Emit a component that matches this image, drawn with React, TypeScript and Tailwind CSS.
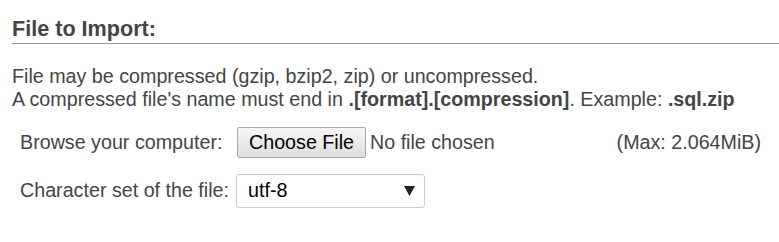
import React from 'react';

const App = () => {
  return (
    <div className="w-[779px] h-[242px] bg-white text-[#444] font-['Liberation_Sans',Arial,sans-serif]">
      <div className="pl-3 pt-[17px]">
        <h2 className="text-[21.6px] leading-[24px] font-bold pb-[2px] border-b border-[#999]">File to Import:</h2>
        <div className="mt-[21px] text-[19.7px] leading-[23px]">
          <p>File may be compressed (gzip, bzip2, zip) or uncompressed.</p>
          <p>
            A compressed file's name must end in <b>.[format].[compression]</b>. Example: <b>.sql.zip</b>
          </p>
        </div>
      </div>
      <div className="pl-5 pr-[18px] mt-[16px] text-[19.7px]">
        <div className="flex items-center h-[31px]">
          <span className="w-[217px]">Browse your computer:</span>
          <button className="w-[129px] h-[31px] border border-[#aaa] rounded-[2px] bg-gradient-to-b from-[#f6f6f6] to-[#dedede] text-black">
            Choose File
          </button>
          <span className="ml-[4px]">No file chosen</span>
          <span className="ml-auto">(Max: 2.064MiB)</span>
        </div>
        <div className="flex items-center mt-[16px]">
          <span className="w-[216px]">Character set of the file:</span>
          <div className="w-[189px] h-[34px] border border-[#ccc] rounded-[3px] flex items-center justify-between pl-[11px] pr-[9px] text-black">
            <span>utf-8</span>
            <svg width="11" height="10" viewBox="0 0 11 10">
              <path d="M0 0 H11 L5.5 10 Z" fill="#222" />
            </svg>
          </div>
        </div>
      </div>
    </div>
  );
};

export default App;
